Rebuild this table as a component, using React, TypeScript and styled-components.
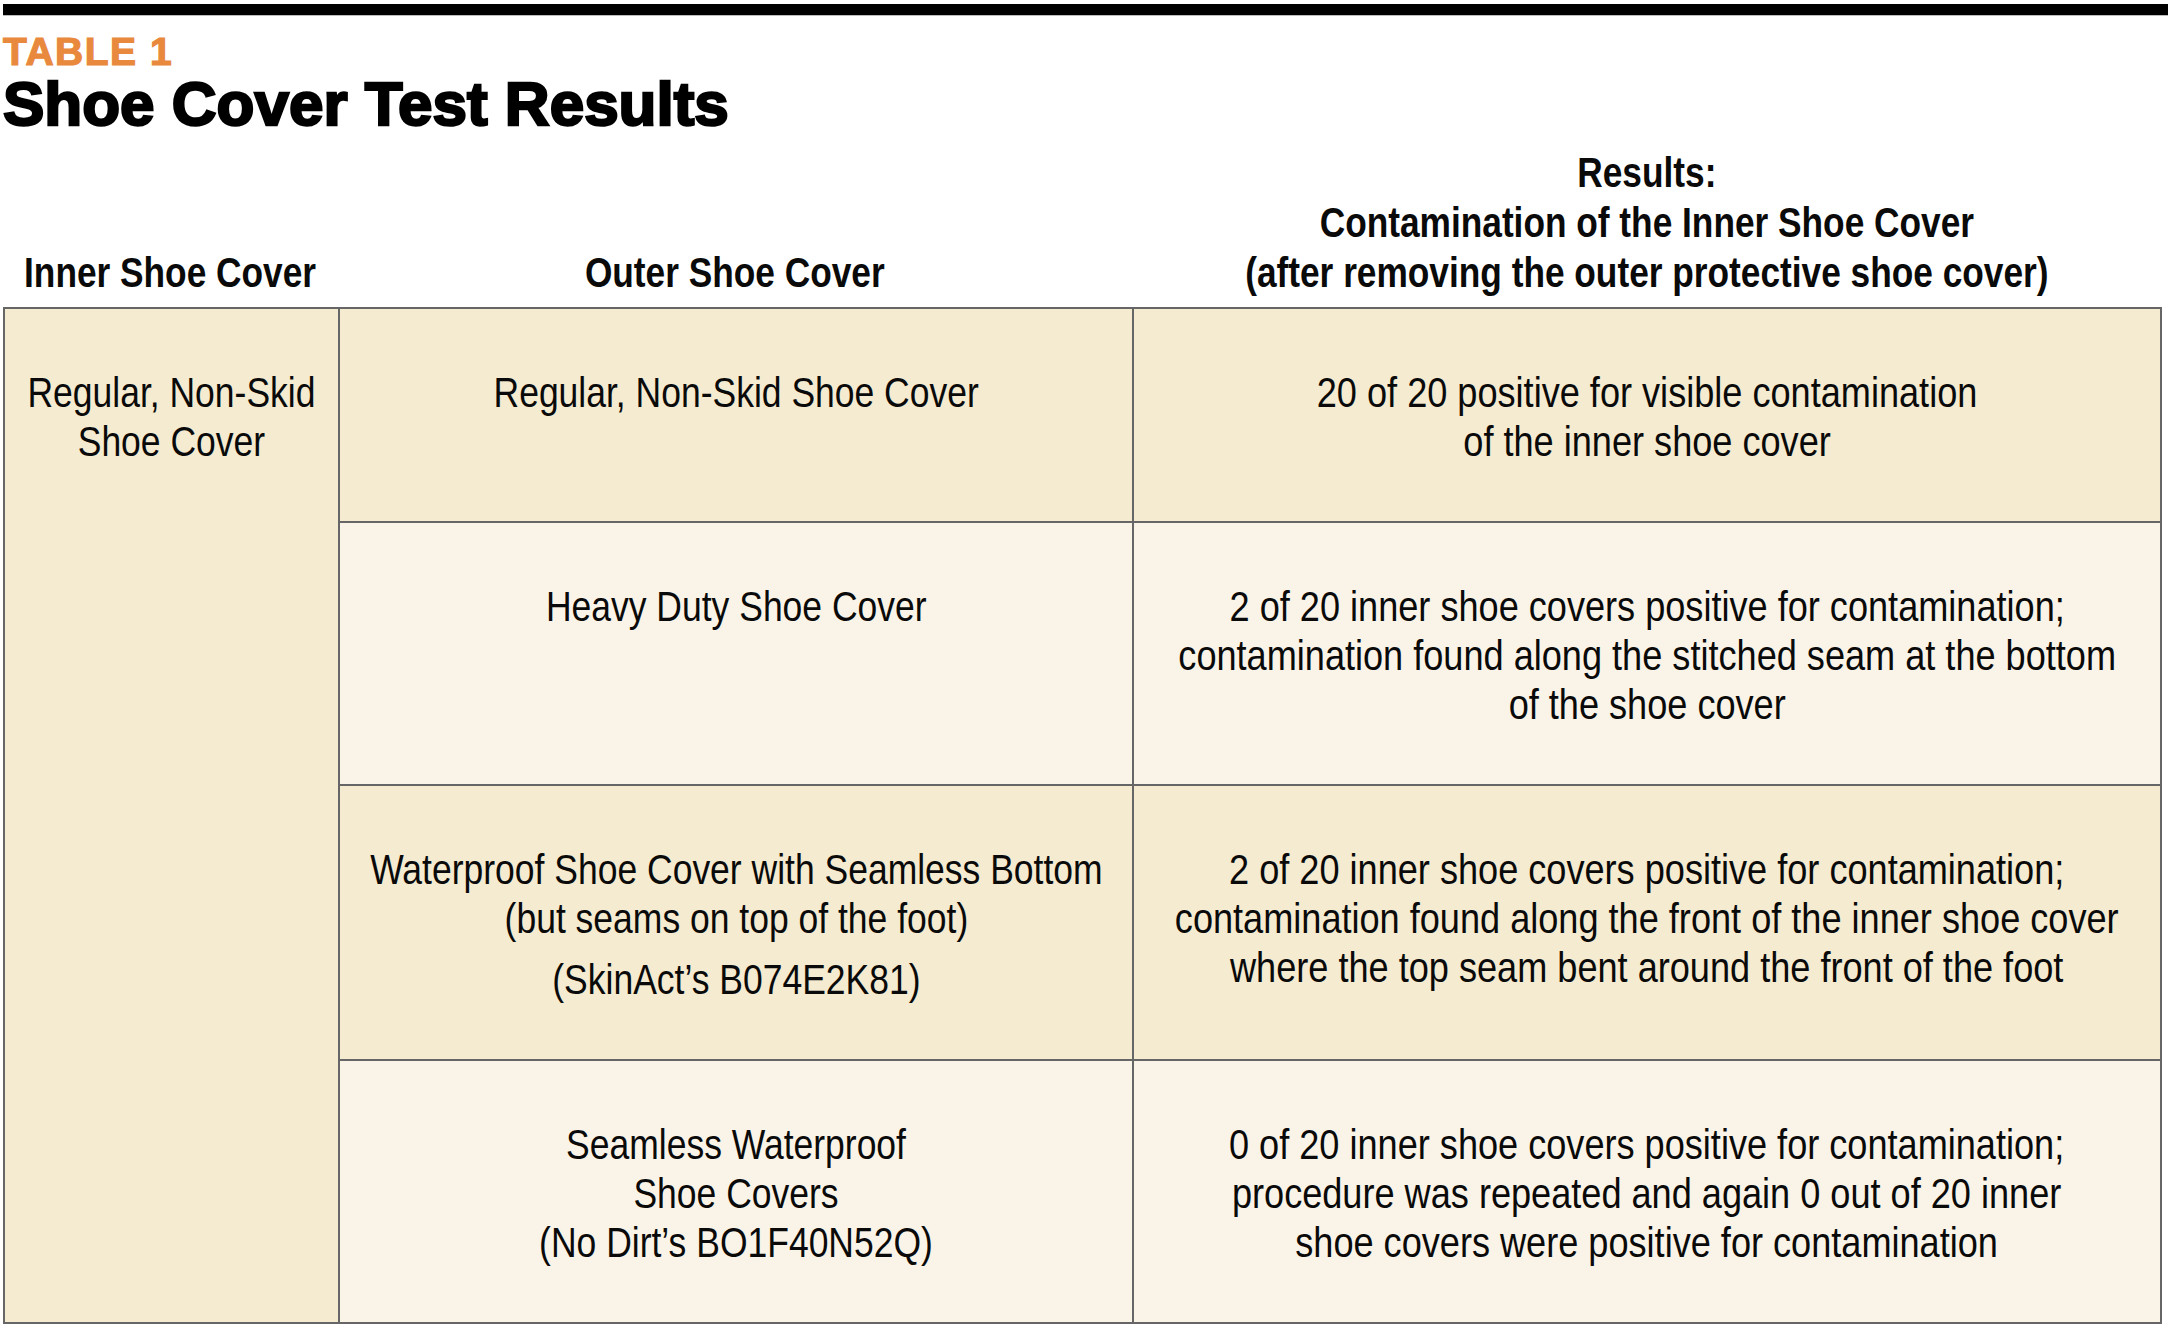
import * as React from 'react'
import styled, { createGlobalStyle } from 'styled-components'

const GlobalStyle = createGlobalStyle`
  html, body {
    margin: 0;
    padding: 0;
    background: #fff;
  }
  body {
    font-family: "Liberation Sans", Arial, sans-serif;
    color: #0a0a0a;
  }
`

// no condensed face is installed, so the narrow look comes from a horizontal squeeze
const Squeeze = styled.div`
  display: flex;
  justify-content: center;
`

const Condensed = styled.div<{ $scale: number }>`
  white-space: nowrap;
  text-align: center;
  transform: scaleX(${p => p.$scale});
  transform-origin: center top;
`

const Page = styled.div`
  width: 2168px;
  padding-left: 3px;
  box-sizing: border-box;
  overflow: hidden;
`

const TopBar = styled.div`
  margin-top: 4px;
  height: 11px;
  background: #000;
  border-bottom: 1px solid #bdbdbd;
`

const Label = styled.div`
  margin-top: 16px;
  font-weight: 700;
  font-size: 39px;
  line-height: 39px;
  letter-spacing: 1.5px;
  color: #e8893d;
  -webkit-text-stroke: 1.2px #e8893d;
`

const Title = styled.h1`
  margin: 2px 0 0;
  font-weight: 700;
  font-size: 62px;
  line-height: 62px;
  color: #000;
  -webkit-text-stroke: 2.4px #000;
`

const HeaderRow = styled.div`
  margin-top: 12px;
  display: grid;
  grid-template-columns: 335px 794px 1030px;
  align-items: end;
`

const HeadCell = styled.div`
  font-weight: 700;
  font-size: 43px;
  line-height: 50px;
  padding-bottom: 10px;
`

const Table = styled.table`
  width: 2159px;
  table-layout: fixed;
  border-collapse: collapse;
  border-top: 2px solid #111;
  border-left: 2px solid #111;
  border-bottom: 2px solid #111;
  border-right: 2px solid #555;
`

const Cell = styled.td<{ $shade: 'dark' | 'light' }>`
  background: ${p => (p.$shade === 'dark' ? '#f5ebd1' : '#faf4e8')};
  border: 2px solid #666;
  vertical-align: top;
  padding: 59px 0 55px;
  font-size: 42px;
  line-height: 49px;
  overflow: visible;
`

const Note = styled.div`
  margin-top: 12px;
`

const rows = [
  {
    outer: <>Regular, Non-Skid Shoe Cover</>,
    result: (
      <>
        20 of 20 positive for visible contamination
        <br />
        of the inner shoe cover
      </>
    )
  },
  {
    outer: <>Heavy Duty Shoe Cover</>,
    result: (
      <>
        2 of 20 inner shoe covers positive for contamination;
        <br />
        contamination found along the stitched seam at the bottom
        <br />
        of the shoe cover
      </>
    )
  },
  {
    outer: (
      <>
        Waterproof Shoe Cover with Seamless Bottom
        <br />
        (but seams on top of the foot)
        <Note>(SkinAct’s B074E2K81)</Note>
      </>
    ),
    result: (
      <>
        2 of 20 inner shoe covers positive for contamination;
        <br />
        contamination found along the front of the inner shoe cover
        <br />
        where the top seam bent around the front of the foot
      </>
    )
  },
  {
    outer: (
      <>
        Seamless Waterproof
        <br />
        Shoe Covers
        <br />
        (No Dirt’s BO1F40N52Q)
      </>
    ),
    result: (
      <>
        0 of 20 inner shoe covers positive for contamination;
        <br />
        procedure was repeated and again 0 out of 20 inner
        <br />
        shoe covers were positive for contamination
      </>
    )
  }
]

const OUTER_SCALE = 0.845
const RESULT_SCALE = 0.86
const HEAD_SCALE = 0.82

export default function App() {
  return (
    <Page>
      <GlobalStyle />
      <TopBar />
      <Label>TABLE 1</Label>
      <Title>Shoe Cover Test Results</Title>
      <HeaderRow>
        <HeadCell>
          <Squeeze>
            <Condensed $scale={HEAD_SCALE}>Inner Shoe Cover</Condensed>
          </Squeeze>
        </HeadCell>
        <HeadCell>
          <Squeeze>
            <Condensed $scale={HEAD_SCALE}>Outer Shoe Cover</Condensed>
          </Squeeze>
        </HeadCell>
        <HeadCell>
          <Squeeze>
            <Condensed $scale={HEAD_SCALE}>
              Results:
              <br />
              Contamination of the Inner Shoe Cover
              <br />
              (after removing the outer protective shoe cover)
            </Condensed>
          </Squeeze>
        </HeadCell>
      </HeaderRow>
      <Table>
        <colgroup>
          <col style={{ width: 335 }} />
          <col style={{ width: 794 }} />
          <col />
        </colgroup>
        <tbody>
          {rows.map((row, i) => (
            <tr key={i}>
              {i === 0 && (
                <Cell $shade="dark" rowSpan={rows.length}>
                  <Squeeze>
                    <Condensed $scale={OUTER_SCALE}>
                      Regular, Non-Skid
                      <br />
                      Shoe Cover
                    </Condensed>
                  </Squeeze>
                </Cell>
              )}
              <Cell $shade={i % 2 === 0 ? 'dark' : 'light'}>
                <Squeeze>
                  <Condensed $scale={OUTER_SCALE}>{row.outer}</Condensed>
                </Squeeze>
              </Cell>
              <Cell $shade={i % 2 === 0 ? 'dark' : 'light'}>
                <Squeeze>
                  <Condensed $scale={RESULT_SCALE}>{row.result}</Condensed>
                </Squeeze>
              </Cell>
            </tr>
          ))}
        </tbody>
      </Table>
    </Page>
  )
}
